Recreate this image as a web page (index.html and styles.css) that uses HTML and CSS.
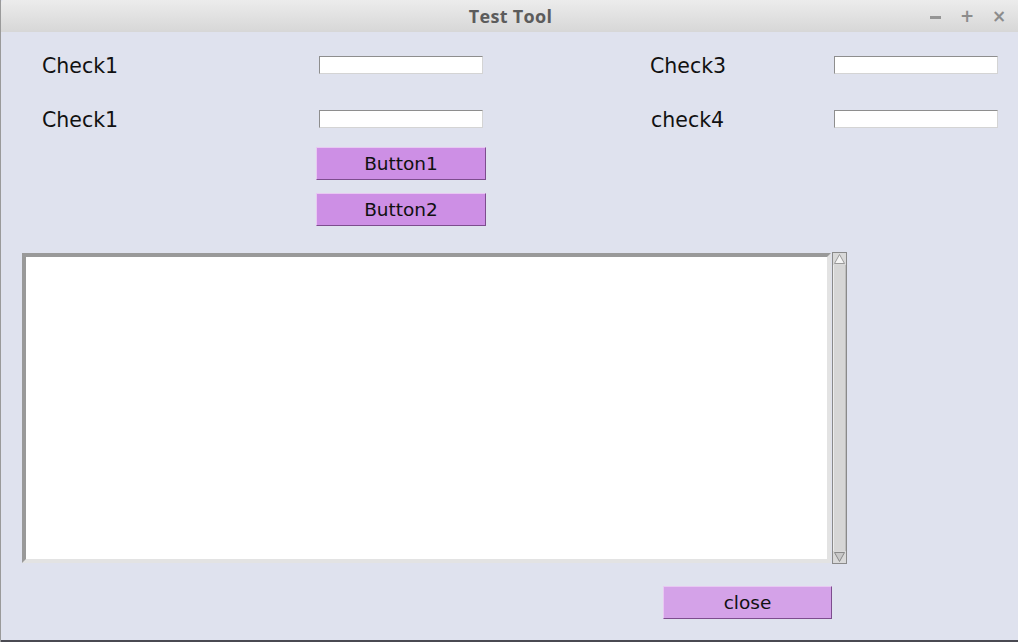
FILE: index.html
```html
<!DOCTYPE html>
<html>
<head>
<meta charset="utf-8">
<link rel="stylesheet" href="styles.css">
</head>
<body>
<div class="window">
  <div class="titlebar">
    <div class="title">Test Tool</div>
    <div class="controls">
      <span class="ctl min"></span>
      <span class="ctl max">+</span>
      <span class="ctl close-x">×</span>
    </div>
  </div>
  <div class="content">
    <div class="form">
      <div class="label">Check1</div>
      <div class="entry"></div>
      <div class="label right">Check3</div>
      <div class="entry"></div>
      <div class="label">Check1</div>
      <div class="entry"></div>
      <div class="label right l4">check4</div>
      <div class="entry"></div>
    </div>
    <div class="buttons">
      <div class="btn">Button1</div>
      <div class="btn">Button2</div>
    </div>
    <div class="textrow">
      <div class="textbox"></div>
      <div class="scrollbar">
        <svg class="arrow" width="13" height="12" viewBox="0 0 13 12">
          <rect x="0" y="0" width="13" height="12" fill="#d9d9d9"/>
          <polygon points="6.5,1.5 11.5,10.5 1.5,10.5" fill="#f4f4f4" stroke="#9a9a9a" stroke-width="1"/>
        </svg>
        <div class="trough"></div>
        <svg class="arrow" width="13" height="12" viewBox="0 0 13 12">
          <rect x="0" y="0" width="13" height="12" fill="#d9d9d9"/>
          <polygon points="1.5,1.5 11.5,1.5 6.5,10.5" fill="#c8c8c8" stroke="#8a8a8a" stroke-width="1"/>
        </svg>
      </div>
    </div>
    <div class="footer">
      <div class="btn closebtn">close</div>
    </div>
  </div>
  <div class="bottomline"></div>
</div>
</body>
</html>
```
FILE: styles.css
```css
html, body {
  margin: 0;
  padding: 0;
}
body {
  width: 1018px;
  height: 642px;
  overflow: hidden;
  background: #dfe2ee;
  font-family: "DejaVu Sans", sans-serif;
  color: #111;
}
.window {
  width: 1018px;
  height: 642px;
  box-sizing: border-box;
  border-left: 1px solid #9a9a9a;
  display: flex;
  flex-direction: column;
  background: #dfe2ee;
}
.titlebar {
  height: 32px;
  flex: none;
  background: linear-gradient(#ececec, #d7d7d7);
  border-top-left-radius: 3px;
  display: flex;
  align-items: center;
  justify-content: center;
  position: relative;
}
.title {
  font-family: "Open Sans", sans-serif;
  font-weight: 700;
  font-size: 18px;
  color: #5c5c5c;
  letter-spacing: 0.3px;
  margin-left: 2px;
}
.controls {
  position: absolute;
  right: 11px;
  top: 0;
  height: 32px;
  display: flex;
  align-items: center;
  gap: 16px;
}
.ctl {
  font-family: "DejaVu Sans", sans-serif;
  font-weight: 700;
  font-size: 17px;
  color: #8c8c8c;
  width: 16px;
  text-align: center;
}
.min {
  height: 3px;
  width: 11px;
  background: #959595;
  margin-top: 3px;
  margin-right: 2px;
}
.form {
  display: grid;
  grid-template-columns: 277px 164px 167px 184px 164px;
  grid-template-rows: 18px 18px;
  row-gap: 36px;
  align-items: center;
  margin-top: 24px;
  margin-left: 41px;
}
.label {
  grid-column: 1;
  font-size: 20.5px;
  line-height: 20px;
  padding-top: 1px;
}
.label.right {
  grid-column: 4;
}
.l4 {
  padding-left: 1px;
}
.entry {
  height: 18px;
  box-sizing: border-box;
  background: #fff;
  border-top: 1px solid #8e8e8e;
  border-left: 1px solid #8e8e8e;
  border-bottom: 1px solid #d4d4d4;
  border-right: 1px solid #d4d4d4;
}
.buttons {
  display: flex;
  flex-direction: column;
  gap: 13px;
  margin-top: 19px;
  margin-left: 315px;
}
.btn {
  width: 170px;
  height: 33px;
  box-sizing: border-box;
  background: #cd8fe5;
  border-top: 1px solid #e8c8f2;
  border-left: 1px solid #e8c8f2;
  border-bottom: 1px solid #7d4d8e;
  border-right: 1px solid #7d4d8e;
  display: flex;
  align-items: center;
  justify-content: center;
  font-size: 18.5px;
  color: #111;
}
.textrow {
  display: flex;
  margin-top: 27px;
  margin-left: 21px;
  height: 310px;
}
.textbox {
  width: 809px;
  height: 310px;
  box-sizing: border-box;
  background: #fff;
  border-style: solid;
  border-width: 4px;
  border-color: #999 #e3e3e3 #e3e3e3 #999;
}
.scrollbar {
  width: 15px;
  height: 312px;
  margin-top: -1px;
  margin-left: 1px;
  box-sizing: border-box;
  border: 1px solid #8a8a8a;
  background: #d9d9d9;
  display: flex;
  flex-direction: column;
  justify-content: space-between;
}
.arrow {
  display: block;
  flex: none;
}
.trough {
  flex: 1;
  background: #d6d6d6;
  border-left: 1px solid #ececec;
  border-right: 1px solid #bdbdbd;
}
.footer {
  display: flex;
  margin-top: 23px;
  margin-left: 662px;
}
.closebtn {
  width: 169px;
  height: 33px;
  background: #d4a2e8;
}
.bottomline {
  margin-top: auto;
  height: 2px;
  background: #4a4a52;
  flex: none;
}
```
